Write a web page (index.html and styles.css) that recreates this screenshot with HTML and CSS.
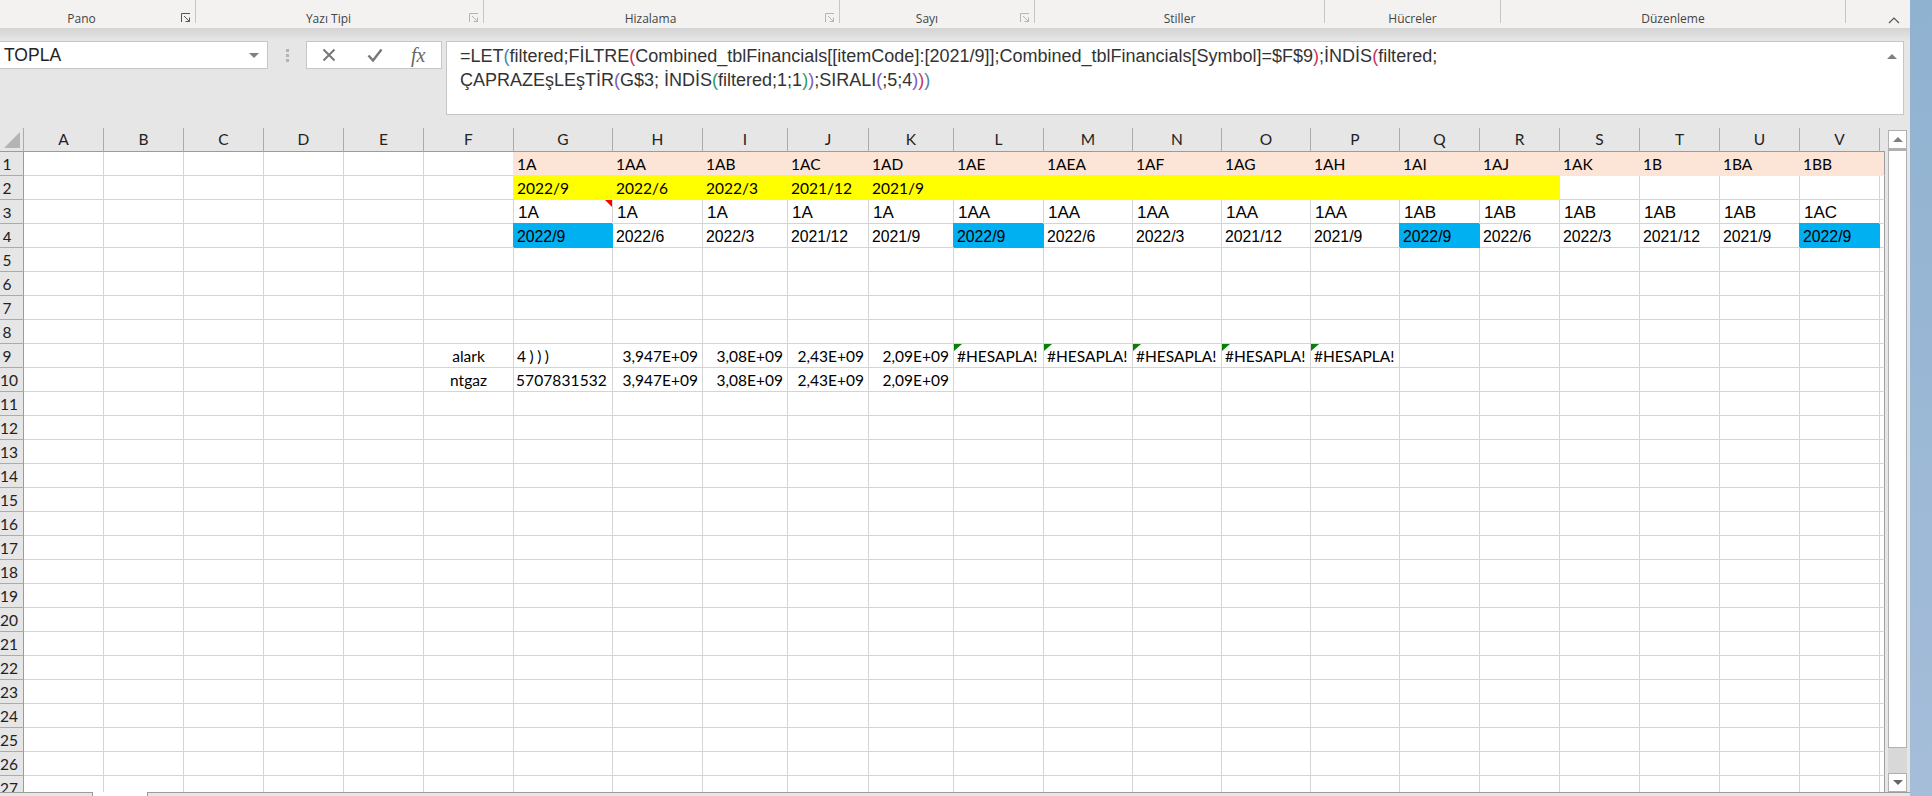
FILE: index.html
```html
<!DOCTYPE html>
<html lang="tr">
<head>
<meta charset="utf-8">
<title>Excel</title>
<link rel="stylesheet" href="styles.css">
</head>
<body>
<div class="window">
<div class="main">
<div class="ribbon">
<div class="group g1"><span>Pano</span><svg class="launcher" viewBox="0 0 10 10"><path d="M.5 9V.5H9M3 3l5.5 5.5M4.5 8.5h4v-4"/></svg></div>
<div class="group g2"><span>Yazı Tipi</span><svg class="launcher off" viewBox="0 0 10 10"><path d="M.5 9V.5H9M3 3l5.5 5.5M4.5 8.5h4v-4"/></svg></div>
<div class="group g3"><span>Hizalama</span><svg class="launcher off" viewBox="0 0 10 10"><path d="M.5 9V.5H9M3 3l5.5 5.5M4.5 8.5h4v-4"/></svg></div>
<div class="group g4"><span>Sayı</span><svg class="launcher off" viewBox="0 0 10 10"><path d="M.5 9V.5H9M3 3l5.5 5.5M4.5 8.5h4v-4"/></svg></div>
<div class="group g5"><span>Stiller</span></div>
<div class="group g6"><span>Hücreler</span></div>
<div class="group g7"><span>Düzenleme</span></div>
<div class="group g8"><svg class="chevron" viewBox="0 0 12 7"><path d="M1 6l5-5 5 5"/></svg></div>
</div>
<div class="formula-bar">
<div class="name-box"><span>TOPLA</span><i class="tri down"></i></div>
<div class="grip"><b></b><b></b><b></b></div>
<div class="fx-buttons">
<svg class="fx-icon" viewBox="0 0 14 14"><path d="M1.5 1.5l11 11M12.5 1.5l-11 11"/></svg>
<svg class="fx-icon check" viewBox="0 0 16 14"><path d="M1.5 7.5l4.5 5 8.5-11"/></svg>
<span class="fx-text">fx</span>
</div>
<div class="formula">
<div class="formula-text">=LET<span class="p1">(</span>filtered;FİLTRE<span class="p2">(</span>Combined_tblFinancials[[itemCode]:[2021/9]];Combined_tblFinancials[Symbol]=$F$9<span class="p2">)</span>;İNDİS<span class="p2">(</span>filtered;<br>ÇAPRAZEşLEşTİR<span class="p3">(</span>G$3; İNDİS<span class="p4">(</span>filtered;1;1<span class="p4">)</span><span class="p3">)</span>;SIRALI<span class="p3">(</span>;5;4<span class="p3">)</span><span class="p2">)</span><span class="p1">)</span></div>
<i class="tri up"></i>
</div>
</div>
<div class="sheet-row">
<div class="sheet">
<table class="grid">
<colgroup><col class="w-h"><col class="w80"><col class="w80"><col class="w80"><col class="w80"><col class="w80"><col class="w90"><col class="w99"><col class="w90"><col class="w85"><col class="w81"><col class="w85"><col class="w90"><col class="w89"><col class="w89"><col class="w89"><col class="w89"><col class="w80"><col class="w80"><col class="w80"><col class="w80"><col class="w80"><col class="w80"><col class="w-e"></colgroup>
<thead>
<tr><th class="corner"><i></i></th><th>A</th><th>B</th><th>C</th><th>D</th><th>E</th><th>F</th><th>G</th><th>H</th><th>I</th><th>J</th><th>K</th><th>L</th><th>M</th><th>N</th><th>O</th><th>P</th><th>Q</th><th>R</th><th>S</th><th>T</th><th>U</th><th>V</th><th class="end"></th></tr>
</thead>
<tbody>
<tr class="r1"><th>1</th><td></td><td></td><td></td><td></td><td></td><td></td><td class="peach">1A</td><td class="peach">1AA</td><td class="peach">1AB</td><td class="peach">1AC</td><td class="peach">1AD</td><td class="peach">1AE</td><td class="peach">1AEA</td><td class="peach">1AF</td><td class="peach">1AG</td><td class="peach">1AH</td><td class="peach">1AI</td><td class="peach">1AJ</td><td class="peach">1AK</td><td class="peach">1B</td><td class="peach">1BA</td><td class="peach">1BB</td><td class="peach"></td></tr>
<tr><th>2</th><td></td><td></td><td></td><td></td><td></td><td></td><td class="yellow">2022/9</td><td class="yellow">2022/6</td><td class="yellow">2022/3</td><td class="yellow">2021/12</td><td class="yellow">2021/9</td><td class="yellow"></td><td class="yellow"></td><td class="yellow"></td><td class="yellow"></td><td class="yellow"></td><td class="yellow"></td><td class="yellow"></td><td></td><td></td><td></td><td></td><td></td></tr>
<tr class="arial a3"><th>3</th><td></td><td></td><td></td><td></td><td></td><td></td><td class="note">1A</td><td>1A</td><td>1A</td><td>1A</td><td>1A</td><td>1AA</td><td>1AA</td><td>1AA</td><td>1AA</td><td>1AA</td><td>1AB</td><td>1AB</td><td>1AB</td><td>1AB</td><td>1AB</td><td>1AC</td><td></td></tr>
<tr class="arial a4"><th>4</th><td></td><td></td><td></td><td></td><td></td><td></td><td class="blue">2022/9</td><td>2022/6</td><td>2022/3</td><td>2021/12</td><td>2021/9</td><td class="blue">2022/9</td><td>2022/6</td><td>2022/3</td><td>2021/12</td><td>2021/9</td><td class="blue">2022/9</td><td>2022/6</td><td>2022/3</td><td>2021/12</td><td>2021/9</td><td class="blue">2022/9</td><td></td></tr>
<tr><th>5</th><td></td><td></td><td></td><td></td><td></td><td></td><td></td><td></td><td></td><td></td><td></td><td></td><td></td><td></td><td></td><td></td><td></td><td></td><td></td><td></td><td></td><td></td><td></td></tr>
<tr><th>6</th><td></td><td></td><td></td><td></td><td></td><td></td><td></td><td></td><td></td><td></td><td></td><td></td><td></td><td></td><td></td><td></td><td></td><td></td><td></td><td></td><td></td><td></td><td></td></tr>
<tr><th>7</th><td></td><td></td><td></td><td></td><td></td><td></td><td></td><td></td><td></td><td></td><td></td><td></td><td></td><td></td><td></td><td></td><td></td><td></td><td></td><td></td><td></td><td></td><td></td></tr>
<tr><th>8</th><td></td><td></td><td></td><td></td><td></td><td></td><td></td><td></td><td></td><td></td><td></td><td></td><td></td><td></td><td></td><td></td><td></td><td></td><td></td><td></td><td></td><td></td><td></td></tr>
<tr><th>9</th><td></td><td></td><td></td><td></td><td></td><td class="center">alark</td><td class="spaced">4)))</td><td class="num">3,947E+09</td><td class="num">3,08E+09</td><td class="num">2,43E+09</td><td class="num">2,09E+09</td><td class="err">#HESAPLA!</td><td class="err">#HESAPLA!</td><td class="err">#HESAPLA!</td><td class="err">#HESAPLA!</td><td class="err">#HESAPLA!</td><td></td><td></td><td></td><td></td><td></td><td></td><td></td></tr>
<tr><th>10</th><td></td><td></td><td></td><td></td><td></td><td class="center">ntgaz</td><td class="long">5707831532</td><td class="num">3,947E+09</td><td class="num">3,08E+09</td><td class="num">2,43E+09</td><td class="num">2,09E+09</td><td></td><td></td><td></td><td></td><td></td><td></td><td></td><td></td><td></td><td></td><td></td><td></td></tr>
<tr><th>11</th><td></td><td></td><td></td><td></td><td></td><td></td><td></td><td></td><td></td><td></td><td></td><td></td><td></td><td></td><td></td><td></td><td></td><td></td><td></td><td></td><td></td><td></td><td></td></tr>
<tr><th>12</th><td></td><td></td><td></td><td></td><td></td><td></td><td></td><td></td><td></td><td></td><td></td><td></td><td></td><td></td><td></td><td></td><td></td><td></td><td></td><td></td><td></td><td></td><td></td></tr>
<tr><th>13</th><td></td><td></td><td></td><td></td><td></td><td></td><td></td><td></td><td></td><td></td><td></td><td></td><td></td><td></td><td></td><td></td><td></td><td></td><td></td><td></td><td></td><td></td><td></td></tr>
<tr><th>14</th><td></td><td></td><td></td><td></td><td></td><td></td><td></td><td></td><td></td><td></td><td></td><td></td><td></td><td></td><td></td><td></td><td></td><td></td><td></td><td></td><td></td><td></td><td></td></tr>
<tr><th>15</th><td></td><td></td><td></td><td></td><td></td><td></td><td></td><td></td><td></td><td></td><td></td><td></td><td></td><td></td><td></td><td></td><td></td><td></td><td></td><td></td><td></td><td></td><td></td></tr>
<tr><th>16</th><td></td><td></td><td></td><td></td><td></td><td></td><td></td><td></td><td></td><td></td><td></td><td></td><td></td><td></td><td></td><td></td><td></td><td></td><td></td><td></td><td></td><td></td><td></td></tr>
<tr><th>17</th><td></td><td></td><td></td><td></td><td></td><td></td><td></td><td></td><td></td><td></td><td></td><td></td><td></td><td></td><td></td><td></td><td></td><td></td><td></td><td></td><td></td><td></td><td></td></tr>
<tr><th>18</th><td></td><td></td><td></td><td></td><td></td><td></td><td></td><td></td><td></td><td></td><td></td><td></td><td></td><td></td><td></td><td></td><td></td><td></td><td></td><td></td><td></td><td></td><td></td></tr>
<tr><th>19</th><td></td><td></td><td></td><td></td><td></td><td></td><td></td><td></td><td></td><td></td><td></td><td></td><td></td><td></td><td></td><td></td><td></td><td></td><td></td><td></td><td></td><td></td><td></td></tr>
<tr><th>20</th><td></td><td></td><td></td><td></td><td></td><td></td><td></td><td></td><td></td><td></td><td></td><td></td><td></td><td></td><td></td><td></td><td></td><td></td><td></td><td></td><td></td><td></td><td></td></tr>
<tr><th>21</th><td></td><td></td><td></td><td></td><td></td><td></td><td></td><td></td><td></td><td></td><td></td><td></td><td></td><td></td><td></td><td></td><td></td><td></td><td></td><td></td><td></td><td></td><td></td></tr>
<tr><th>22</th><td></td><td></td><td></td><td></td><td></td><td></td><td></td><td></td><td></td><td></td><td></td><td></td><td></td><td></td><td></td><td></td><td></td><td></td><td></td><td></td><td></td><td></td><td></td></tr>
<tr><th>23</th><td></td><td></td><td></td><td></td><td></td><td></td><td></td><td></td><td></td><td></td><td></td><td></td><td></td><td></td><td></td><td></td><td></td><td></td><td></td><td></td><td></td><td></td><td></td></tr>
<tr><th>24</th><td></td><td></td><td></td><td></td><td></td><td></td><td></td><td></td><td></td><td></td><td></td><td></td><td></td><td></td><td></td><td></td><td></td><td></td><td></td><td></td><td></td><td></td><td></td></tr>
<tr><th>25</th><td></td><td></td><td></td><td></td><td></td><td></td><td></td><td></td><td></td><td></td><td></td><td></td><td></td><td></td><td></td><td></td><td></td><td></td><td></td><td></td><td></td><td></td><td></td></tr>
<tr><th>26</th><td></td><td></td><td></td><td></td><td></td><td></td><td></td><td></td><td></td><td></td><td></td><td></td><td></td><td></td><td></td><td></td><td></td><td></td><td></td><td></td><td></td><td></td><td></td></tr>
<tr><th>27</th><td></td><td></td><td></td><td></td><td></td><td></td><td></td><td></td><td></td><td></td><td></td><td></td><td></td><td></td><td></td><td></td><td></td><td></td><td></td><td></td><td></td><td></td><td></td></tr>
</tbody>
</table>
</div>
<div class="scrollbar">
<div class="sb-btn"><i class="tri up"></i></div>
<div class="sb-thumb"></div>
<div class="sb-track"></div>
<div class="sb-btn"><i class="tri down dark"></i></div>
</div>
</div>
<div class="tabs"><div class="tab-a"></div><div class="tab-active"></div><div class="tab-b"></div></div>
</div>
<div class="side"></div>
</div>
</body>
</html>
```
FILE: styles.css
```css
* { box-sizing: border-box; }
html, body { margin: 0; height: 796px; overflow: hidden; background: #e6e6e6; }
.window { display: flex; width: 1932px; height: 796px; }
.main { width: 1910px; display: flex; flex-direction: column; }
.side { flex: 1; background: linear-gradient(#8fb2d0, #a5bdd9); }

.ribbon { height: 28px; display: flex; background: #f3f2f1; font: 12px "Open Sans", sans-serif; color: #444; }
.group { position: relative; height: 23px; border-right: 1px solid #c8c6c4; display: flex; justify-content: center; padding-top: 10px; line-height: 18px; }
.g1 { width: 196px; padding-right: 32px; }
.g2 { width: 288px; padding-right: 22px; }
.g3 { width: 356px; padding-right: 22px; }
.g4 { width: 195px; padding-right: 20px; }
.g5 { width: 290px; }
.g6 { width: 176px; }
.g7 { width: 345px; }
.g8 { flex: 1; border: 0; }
.launcher { position: absolute; right: 4px; top: 13px; width: 10px; height: 10px; fill: none; stroke: #555; stroke-width: 1; }
.launcher.off { stroke: #b5b5b5; }
.chevron { position: absolute; left: 42px; top: 17px; width: 12px; height: 7px; fill: none; stroke: #555; stroke-width: 1.2; }

.formula-bar { height: 100px; display: flex; align-items: flex-start; padding-top: 13px; background: linear-gradient(#d4d4d4, #e6e6e6 12px); font-family: "Liberation Sans", sans-serif; }
.name-box { width: 268px; height: 28px; padding: 0 8px 0 4px; display: flex; align-items: center; justify-content: space-between; background: #fff; border: 1px solid #c6c6c6; border-left: 0; font-size: 17.5px; color: #222; }
.grip { width: 38px; height: 28px; display: flex; flex-direction: column; align-items: center; justify-content: center; gap: 2px; }
.grip b { width: 3px; height: 3px; background: #b4b4b4; }
.fx-buttons { width: 136px; height: 28px; display: flex; align-items: center; background: #fff; border: 1px solid #c6c6c6; padding-left: 15px; }
.fx-icon { width: 14px; height: 14px; fill: none; stroke: #777; stroke-width: 2; }
.fx-icon.check { width: 16px; margin-left: 31px; stroke-width: 2.4; }
.fx-text { margin-left: 28px; font: italic 20px "Liberation Serif", serif; color: #666; }
.formula { width: 1458px; height: 74px; margin-left: 4px; padding: 2px 6px 0 13px; display: flex; justify-content: space-between; background: #fff; border: 1px solid #c6c6c6; font-size: 18px; line-height: 24px; color: #333; white-space: nowrap; }
.formula .tri.up { margin-top: 10px; }
.p1 { color: #4a86a8; }
.p2 { color: #c9325e; }
.p3 { color: #7a5cc0; }
.p4 { color: #2f9a5e; }

.tri { display: block; width: 0; height: 0; border-left: 5px solid transparent; border-right: 5px solid transparent; }
.tri.up { border-bottom: 5px solid #808080; }
.tri.down { border-top: 5px solid #808080; }
.tri.down.dark { border-top-color: #666; }

.sheet-row { height: 664px; display: flex; }
.sheet { width: 1885px; height: 664px; overflow: hidden; background: #fff; }
.grid { table-layout: fixed; width: 1885px; border-collapse: separate; border-spacing: 0; font: 15.5px/23px Lato, sans-serif; color: #000; }
.w-h { width: 24px; } .w80 { width: 80px; } .w81 { width: 81px; } .w85 { width: 85px; } .w89 { width: 89px; } .w90 { width: 90px; } .w99 { width: 99px; } .w-e { width: 5px; }
th, td { height: 24px; padding: 0; font-weight: 400; white-space: nowrap; overflow: visible; }
thead th { background: #e6e6e6; border-right: 1px solid #ababab; border-bottom: 1px solid #9b9b9b; text-align: center; color: #222; }
thead th.end { border-right: 0; }
.corner { position: relative; }
.corner i { position: absolute; left: 4px; top: 4px; width: 16px; height: 16px; background: #b4b4b4; clip-path: polygon(100% 0, 100% 100%, 0 100%); }
tbody th { background: #e6e6e6; border-right: 1px solid #9b9b9b; border-bottom: 1px solid #ababab; padding: 2px 9px 0 0; line-height: 21px; text-align: center; color: #222; }
td { border-right: 1px solid #d4d4d4; border-bottom: 1px solid #d4d4d4; padding: 2px 0 0 3px; line-height: 21px; position: relative; }
tbody td:last-child { border-right-color: #9e9e9e; }
.arial { font-family: "Liberation Sans", sans-serif; }
.a3 td { font-size: 17px; padding-left: 4px; }
.a4 td { font-size: 15.8px; padding-left: 3px; }
.peach { background: #fce4d6; border-color: #fce4d6; box-shadow: -1px 0 0 #fce4d6; }
.yellow { background: #ff0; border-color: #ff0; box-shadow: -1px -1px 0 #ff0; }
.blue { background: #00b0f0; border-color: #00b0f0; box-shadow: -1px -1px 0 #00b0f0; }
.center { text-align: center; padding-left: 0; }
.num { text-align: right; padding: 2px 4px 0 0; }
.err { padding-left: 3px; }
.spaced { letter-spacing: 3.5px; }
.long { padding-left: 2px; letter-spacing: 0.1px; }
.err::before { content: ""; position: absolute; left: 0; top: 0; width: 8px; height: 7px; background: #0a7d0a; clip-path: polygon(0 0, 100% 0, 0 100%); }
.note::after { content: ""; position: absolute; right: 0; top: 0; width: 7px; height: 7px; background: #f00; clip-path: polygon(0 0, 100% 0, 100% 100%); }

.scrollbar { flex: 1; display: flex; flex-direction: column; padding: 2px 3px 0; }
.sb-btn { height: 19px; flex: none; display: flex; align-items: center; justify-content: center; background: #fff; border: 1px solid #b0b0b0; }
.sb-thumb { height: 599px; flex: none; background: #fff; border: 1px solid #b0b0b0; border-top-width: 2px; }
.sb-track { flex: 1; background: #d8d8d8; }

.tabs { flex: 1; display: flex; }
.tab-a { width: 93px; border-top: 1px solid #9b9b9b; border-right: 1px solid #9b9b9b; }
.tab-active { width: 54px; background: #fff; }
.tab-b { flex: 1; border-top: 1px solid #9b9b9b; border-left: 1px solid #9b9b9b; }
```
